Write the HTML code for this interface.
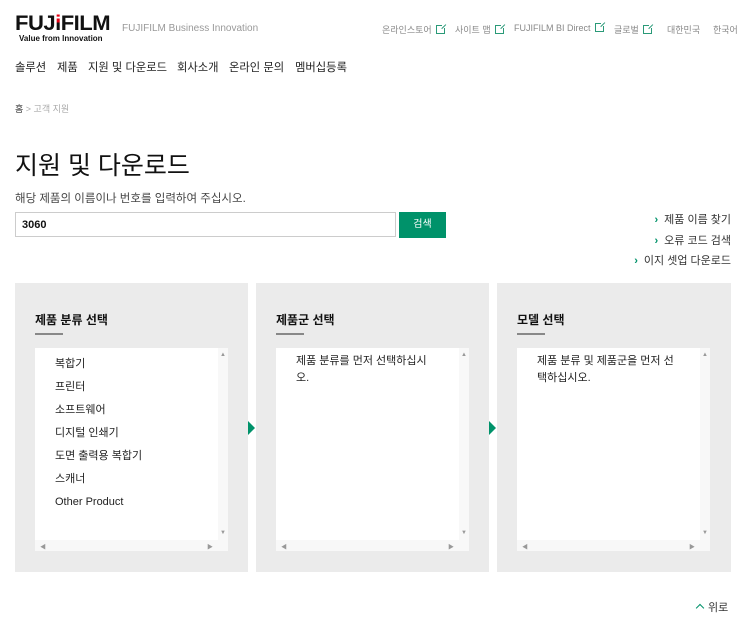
<!DOCTYPE html>
<html><head><meta charset="utf-8"><style>
*{margin:0;padding:0;box-sizing:border-box}
body{width:743px;height:640px;background:#fff;font-family:"Liberation Sans","Noto Sans CJK KR",sans-serif;color:#222;position:relative;overflow:hidden}
.a{position:absolute;white-space:nowrap}
.top{font-size:9px;color:#888;top:23px}
.ext{display:inline-block;width:9px;height:9px;border:1.3px solid #2a9a78;margin-left:4px;vertical-align:-1px;position:relative}
.ext:after{content:"";position:absolute;right:-3px;top:-3px;width:5px;height:5px;background:#fff}
.ext:before{content:"";position:absolute;right:-2px;top:-2px;width:6px;height:1.3px;background:#2a9a78;transform:rotate(-45deg);transform-origin:right;z-index:1}
.nav{top:59px;font-size:11.3px;color:#222}
.panel{position:absolute;top:283px;width:233px;height:289px;background:#ebebeb}
.panel h3{position:absolute;left:20px;top:28px;font-size:12px;font-weight:bold;color:#111}
.panel .ul{position:absolute;left:20px;top:50px;width:28px;height:2px;background:#888}
.box{position:absolute;left:20px;top:65px;width:193px;height:203px;background:#fff}
.vs{position:absolute;right:0;top:0;width:10px;height:192px;background:#f8f8f8}
.hs{position:absolute;left:0;bottom:0;width:193px;height:11px;background:#f8f8f8}
.box .t{position:absolute;left:20px;top:5px;font-size:11px;line-height:23px;color:#222}
.sm{position:absolute;font-size:6px;color:#999}
.arr{position:absolute;top:421px;width:0;height:0;border-top:7px solid transparent;border-bottom:7px solid transparent;border-left:7px solid #00926a}
.rl{font-size:11px;color:#333;right:12px}
.rl b{color:#00926a;font-weight:bold;margin-right:6px}
</style></head><body>
<div class="a" style="left:15px;top:12px;font-size:21px;font-weight:900;letter-spacing:-0.5px;color:#111;transform:scaleX(1.05);transform-origin:left">FUJ<span style="background:linear-gradient(#e60012 0 45%,#111 45%);-webkit-background-clip:text;background-clip:text;color:transparent">i</span>FILM</div>
<div class="a" style="left:19px;top:34px;font-size:8px;font-weight:bold;color:#111">Value from Innovation</div>
<div class="a" style="left:122px;top:23px;font-size:10px;color:#999">FUJIFILM Business Innovation</div>
<div class="a top" style="left:382px">온라인스토어<span class="ext"></span></div>
<div class="a top" style="left:455px">사이트 맵<span class="ext"></span></div>
<div class="a top" style="left:514px">FUJIFILM BI Direct<span class="ext"></span></div>
<div class="a top" style="left:614px">글로벌<span class="ext"></span></div>
<div class="a top" style="left:667px">대한민국</div>
<div class="a top" style="left:713px">한국어</div>
<div class="a nav" style="left:15px">솔루션</div>
<div class="a nav" style="left:57px">제품</div>
<div class="a nav" style="left:88px">지원 및 다운로드</div>
<div class="a nav" style="left:177px">회사소개</div>
<div class="a nav" style="left:229px">온라인 문의</div>
<div class="a nav" style="left:295px">멤버십등록</div>
<div class="a" style="left:15px;top:102px;font-size:9px;color:#aaa"><span style="color:#333">홈</span> &gt; 고객 지원</div>
<div class="a" style="left:15px;top:146px;font-size:25px;color:#111">지원 및 다운로드</div>
<div class="a" style="left:15px;top:190px;font-size:11.5px;color:#444">해당 제품의 이름이나 번호를 입력하여 주십시오.</div>
<div class="a" style="left:15px;top:212px;width:381px;height:25px;border:1px solid #ccc;font-size:11px;font-weight:bold;padding:6px 6px;color:#111">3060</div>
<div class="a" style="left:399px;top:212px;width:47px;height:26px;background:#00926a;color:#fff;font-size:10px;text-align:center;line-height:26px">검색</div>
<div class="a rl" style="top:211px"><b>›</b>제품 이름 찾기</div>
<div class="a rl" style="top:232px"><b>›</b>오류 코드 검색</div>
<div class="a rl" style="top:252px"><b>›</b>이지 셋업 다운로드</div>

<div class="panel" style="left:15px"><h3>제품 분류 선택</h3><div class="ul"></div>
<div class="box"><div class="vs"></div><div class="hs"></div><div class="t">복합기<br>프린터<br>소프트웨어<br>디지털 인쇄기<br>도면 출력용 복합기<br>스캐너<br>Other Product</div>
<div class="sm" style="left:185px;top:4px">▲</div><div class="sm" style="left:185px;top:182px">▼</div><div class="sm" style="left:5px;top:194px">◀</div><div class="sm" style="left:172px;top:194px">▶</div></div></div>
<div class="arr" style="left:248px"></div>
<div class="panel" style="left:256px"><h3>제품군 선택</h3><div class="ul"></div>
<div class="box"><div class="vs"></div><div class="hs"></div><div class="t" style="line-height:17px;white-space:normal;width:140px;word-break:break-all">제품 분류를 먼저 선택하십시오.</div>
<div class="sm" style="left:185px;top:4px">▲</div><div class="sm" style="left:185px;top:182px">▼</div><div class="sm" style="left:5px;top:194px">◀</div><div class="sm" style="left:172px;top:194px">▶</div></div></div>
<div class="arr" style="left:489px"></div>
<div class="panel" style="left:497px;width:234px"><h3>모델 선택</h3><div class="ul"></div>
<div class="box"><div class="vs"></div><div class="hs"></div><div class="t" style="line-height:17px;white-space:normal;width:145px;word-break:break-all">제품 분류 및 제품군을 먼저 선택하십시오.</div>
<div class="sm" style="left:185px;top:4px">▲</div><div class="sm" style="left:185px;top:182px">▼</div><div class="sm" style="left:5px;top:194px">◀</div><div class="sm" style="left:172px;top:194px">▶</div></div></div>

<div class="a" style="left:697px;top:599px;font-size:11px;color:#333"><span style="display:inline-block;width:6px;height:6px;border-left:1.5px solid #00926a;border-top:1.5px solid #00926a;transform:rotate(45deg);margin-right:5px;vertical-align:0px"></span>위로</div>
</body></html>
